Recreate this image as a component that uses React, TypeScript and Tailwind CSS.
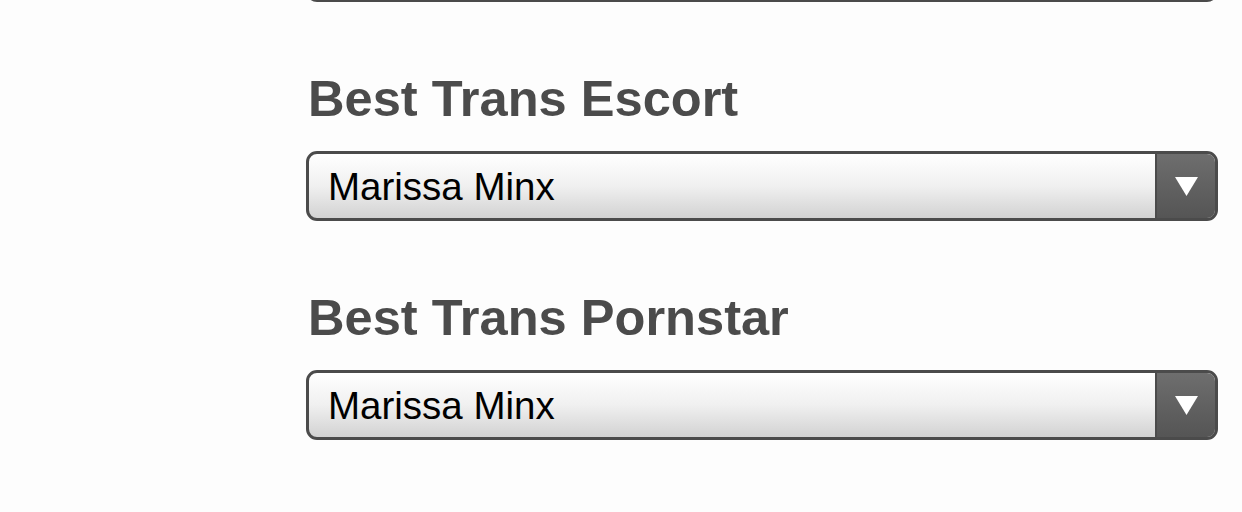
import React from 'react';

const categories = [
  { title: 'Best Trans Escort', value: 'Marissa Minx' },
  { title: 'Best Trans Pornstar', value: 'Marissa Minx' },
];

function SelectBox({ value }: { value: string }) {
  return (
    <div className="flex h-[70px] w-[912px] overflow-hidden rounded-[11px] border-[3px] border-[#4b4b4b] bg-gradient-to-b from-[#ffffff] via-[#f0f0f0] to-[#d2d2d2]">
      <div className="flex flex-1 items-center pl-[19px] pt-[1px] text-[38.5px] text-black">
        {value}
      </div>
      <div className="flex w-[60px] items-center justify-center border-l-[2px] border-[#4b4b4b] bg-gradient-to-b from-[#6e6e6e] to-[#555555]">
        <svg width="23" height="19" viewBox="0 0 23 19" className="mt-[1px]">
          <polygon points="0,0 23,0 11.5,19" fill="#ffffff" />
        </svg>
      </div>
    </div>
  );
}

export default function App() {
  return (
    <div
      className="h-[512px] w-[1242px] overflow-hidden bg-[#fdfdfd] pl-[306px]"
      style={{ fontFamily: '"Liberation Sans", Arial, sans-serif' }}
    >
      {/* previous question, scrolled mostly out of view */}
      <div className="-mt-[68px]">
        <SelectBox value="" />
      </div>
      {categories.map((c) => (
        <div key={c.title}>
          <h2 className="mt-[72px] pl-[2px] text-[50.6px] font-bold leading-[50px] text-[#4b4b4b]">
            {c.title}
          </h2>
          <div className="mt-[27px]">
            <SelectBox value={c.value} />
          </div>
        </div>
      ))}
    </div>
  );
}
